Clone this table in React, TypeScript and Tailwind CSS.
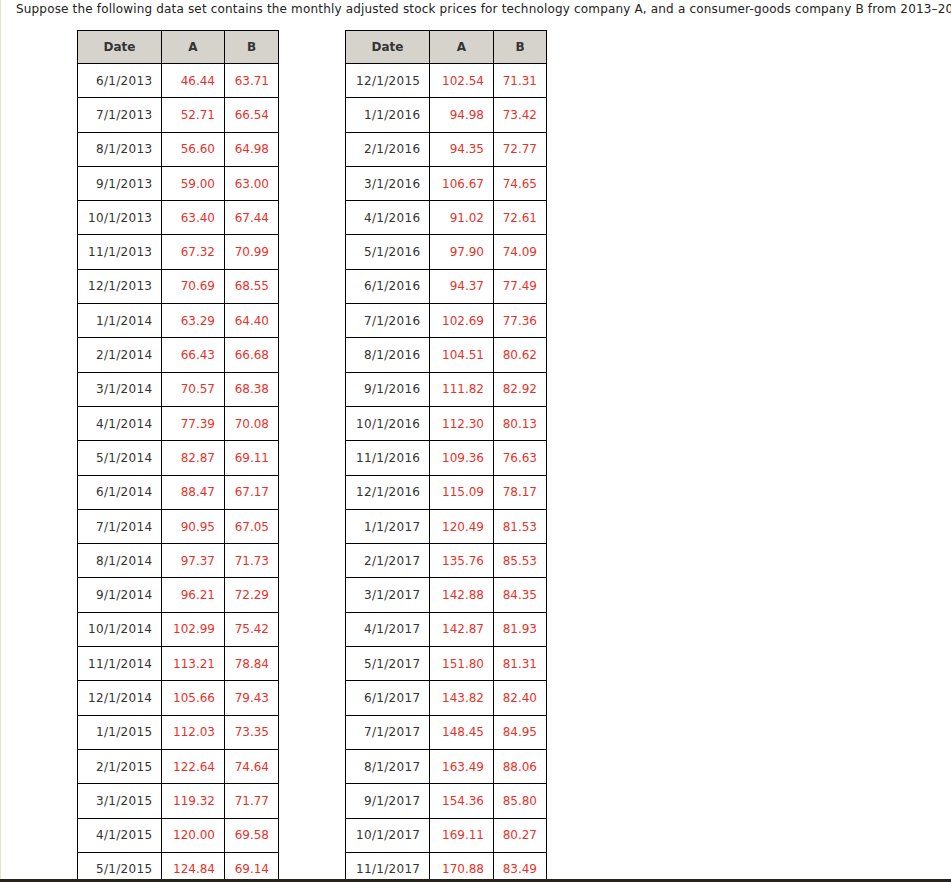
import React from "react";

const t1: [string, string, string][] = [
  ["6/1/2013", "46.44", "63.71"],
  ["7/1/2013", "52.71", "66.54"],
  ["8/1/2013", "56.60", "64.98"],
  ["9/1/2013", "59.00", "63.00"],
  ["10/1/2013", "63.40", "67.44"],
  ["11/1/2013", "67.32", "70.99"],
  ["12/1/2013", "70.69", "68.55"],
  ["1/1/2014", "63.29", "64.40"],
  ["2/1/2014", "66.43", "66.68"],
  ["3/1/2014", "70.57", "68.38"],
  ["4/1/2014", "77.39", "70.08"],
  ["5/1/2014", "82.87", "69.11"],
  ["6/1/2014", "88.47", "67.17"],
  ["7/1/2014", "90.95", "67.05"],
  ["8/1/2014", "97.37", "71.73"],
  ["9/1/2014", "96.21", "72.29"],
  ["10/1/2014", "102.99", "75.42"],
  ["11/1/2014", "113.21", "78.84"],
  ["12/1/2014", "105.66", "79.43"],
  ["1/1/2015", "112.03", "73.35"],
  ["2/1/2015", "122.64", "74.64"],
  ["3/1/2015", "119.32", "71.77"],
  ["4/1/2015", "120.00", "69.58"],
  ["5/1/2015", "124.84", "69.14"],
];

const t2: [string, string, string][] = [
  ["12/1/2015", "102.54", "71.31"],
  ["1/1/2016", "94.98", "73.42"],
  ["2/1/2016", "94.35", "72.77"],
  ["3/1/2016", "106.67", "74.65"],
  ["4/1/2016", "91.02", "72.61"],
  ["5/1/2016", "97.90", "74.09"],
  ["6/1/2016", "94.37", "77.49"],
  ["7/1/2016", "102.69", "77.36"],
  ["8/1/2016", "104.51", "80.62"],
  ["9/1/2016", "111.82", "82.92"],
  ["10/1/2016", "112.30", "80.13"],
  ["11/1/2016", "109.36", "76.63"],
  ["12/1/2016", "115.09", "78.17"],
  ["1/1/2017", "120.49", "81.53"],
  ["2/1/2017", "135.76", "85.53"],
  ["3/1/2017", "142.88", "84.35"],
  ["4/1/2017", "142.87", "81.93"],
  ["5/1/2017", "151.80", "81.31"],
  ["6/1/2017", "143.82", "82.40"],
  ["7/1/2017", "148.45", "84.95"],
  ["8/1/2017", "163.49", "88.06"],
  ["9/1/2017", "154.36", "85.80"],
  ["10/1/2017", "169.11", "80.27"],
  ["11/1/2017", "170.88", "83.49"],
];

function Table({ rows, widths }: { rows: [string, string, string][]; widths: [string, string, string] }) {
  return (
    <div className="border-t border-l border-black shrink-0">
      <div className="flex h-[33px]">
        {["Date", "A", "B"].map((h, i) => (
          <div
            key={h}
            className={`${widths[i]} bg-[#d6d3cc] border-r border-b border-black flex items-center justify-center font-bold text-[#333333]`}
          >
            {h}
          </div>
        ))}
      </div>
      {rows.map((r) => (
        <div key={r[0]} className="flex h-[34.3px]">
          <div className={`${widths[0]} border-r border-b border-black flex items-center justify-end pr-[8.7px] tracking-[0.3px] text-[#333333]`}>
            {r[0]}
          </div>
          <div className={`${widths[1]} border-r border-b border-black flex items-center justify-end pr-[9px] text-[#e5332a]`}>
            {r[1]}
          </div>
          <div className={`${widths[2]} border-r border-b border-black flex items-center justify-end pr-[9px] text-[#e5332a]`}>
            {r[2]}
          </div>
        </div>
      ))}
    </div>
  );
}

export default function App() {
  return (
    <div
      className="w-[951px] h-[882px] overflow-hidden flex flex-col bg-white text-[12px]"
      style={{ fontFamily: '"DejaVu Sans", Verdana, sans-serif' }}
    >
      <div className="flex-1 min-h-0 overflow-hidden border-l border-[#e6e2c6]">
        <div className="pl-[15px] h-[18px] leading-[18px] whitespace-nowrap tracking-[0.17px] text-[#222222]">
          Suppose the following data set contains the monthly adjusted stock prices for technology company A, and a consumer-goods company B from 2013–2017.
        </div>
        <div className="flex gap-[66px] pl-[76px] mt-[12px]">
          <Table rows={t1} widths={["w-[84px]", "w-[63px]", "w-[54px]"]} />
          <Table rows={t2} widths={["w-[84px]", "w-[64px]", "w-[53px]"]} />
        </div>
      </div>
      <div className="h-[3px] bg-[#25231c] shrink-0" />
    </div>
  );
}
